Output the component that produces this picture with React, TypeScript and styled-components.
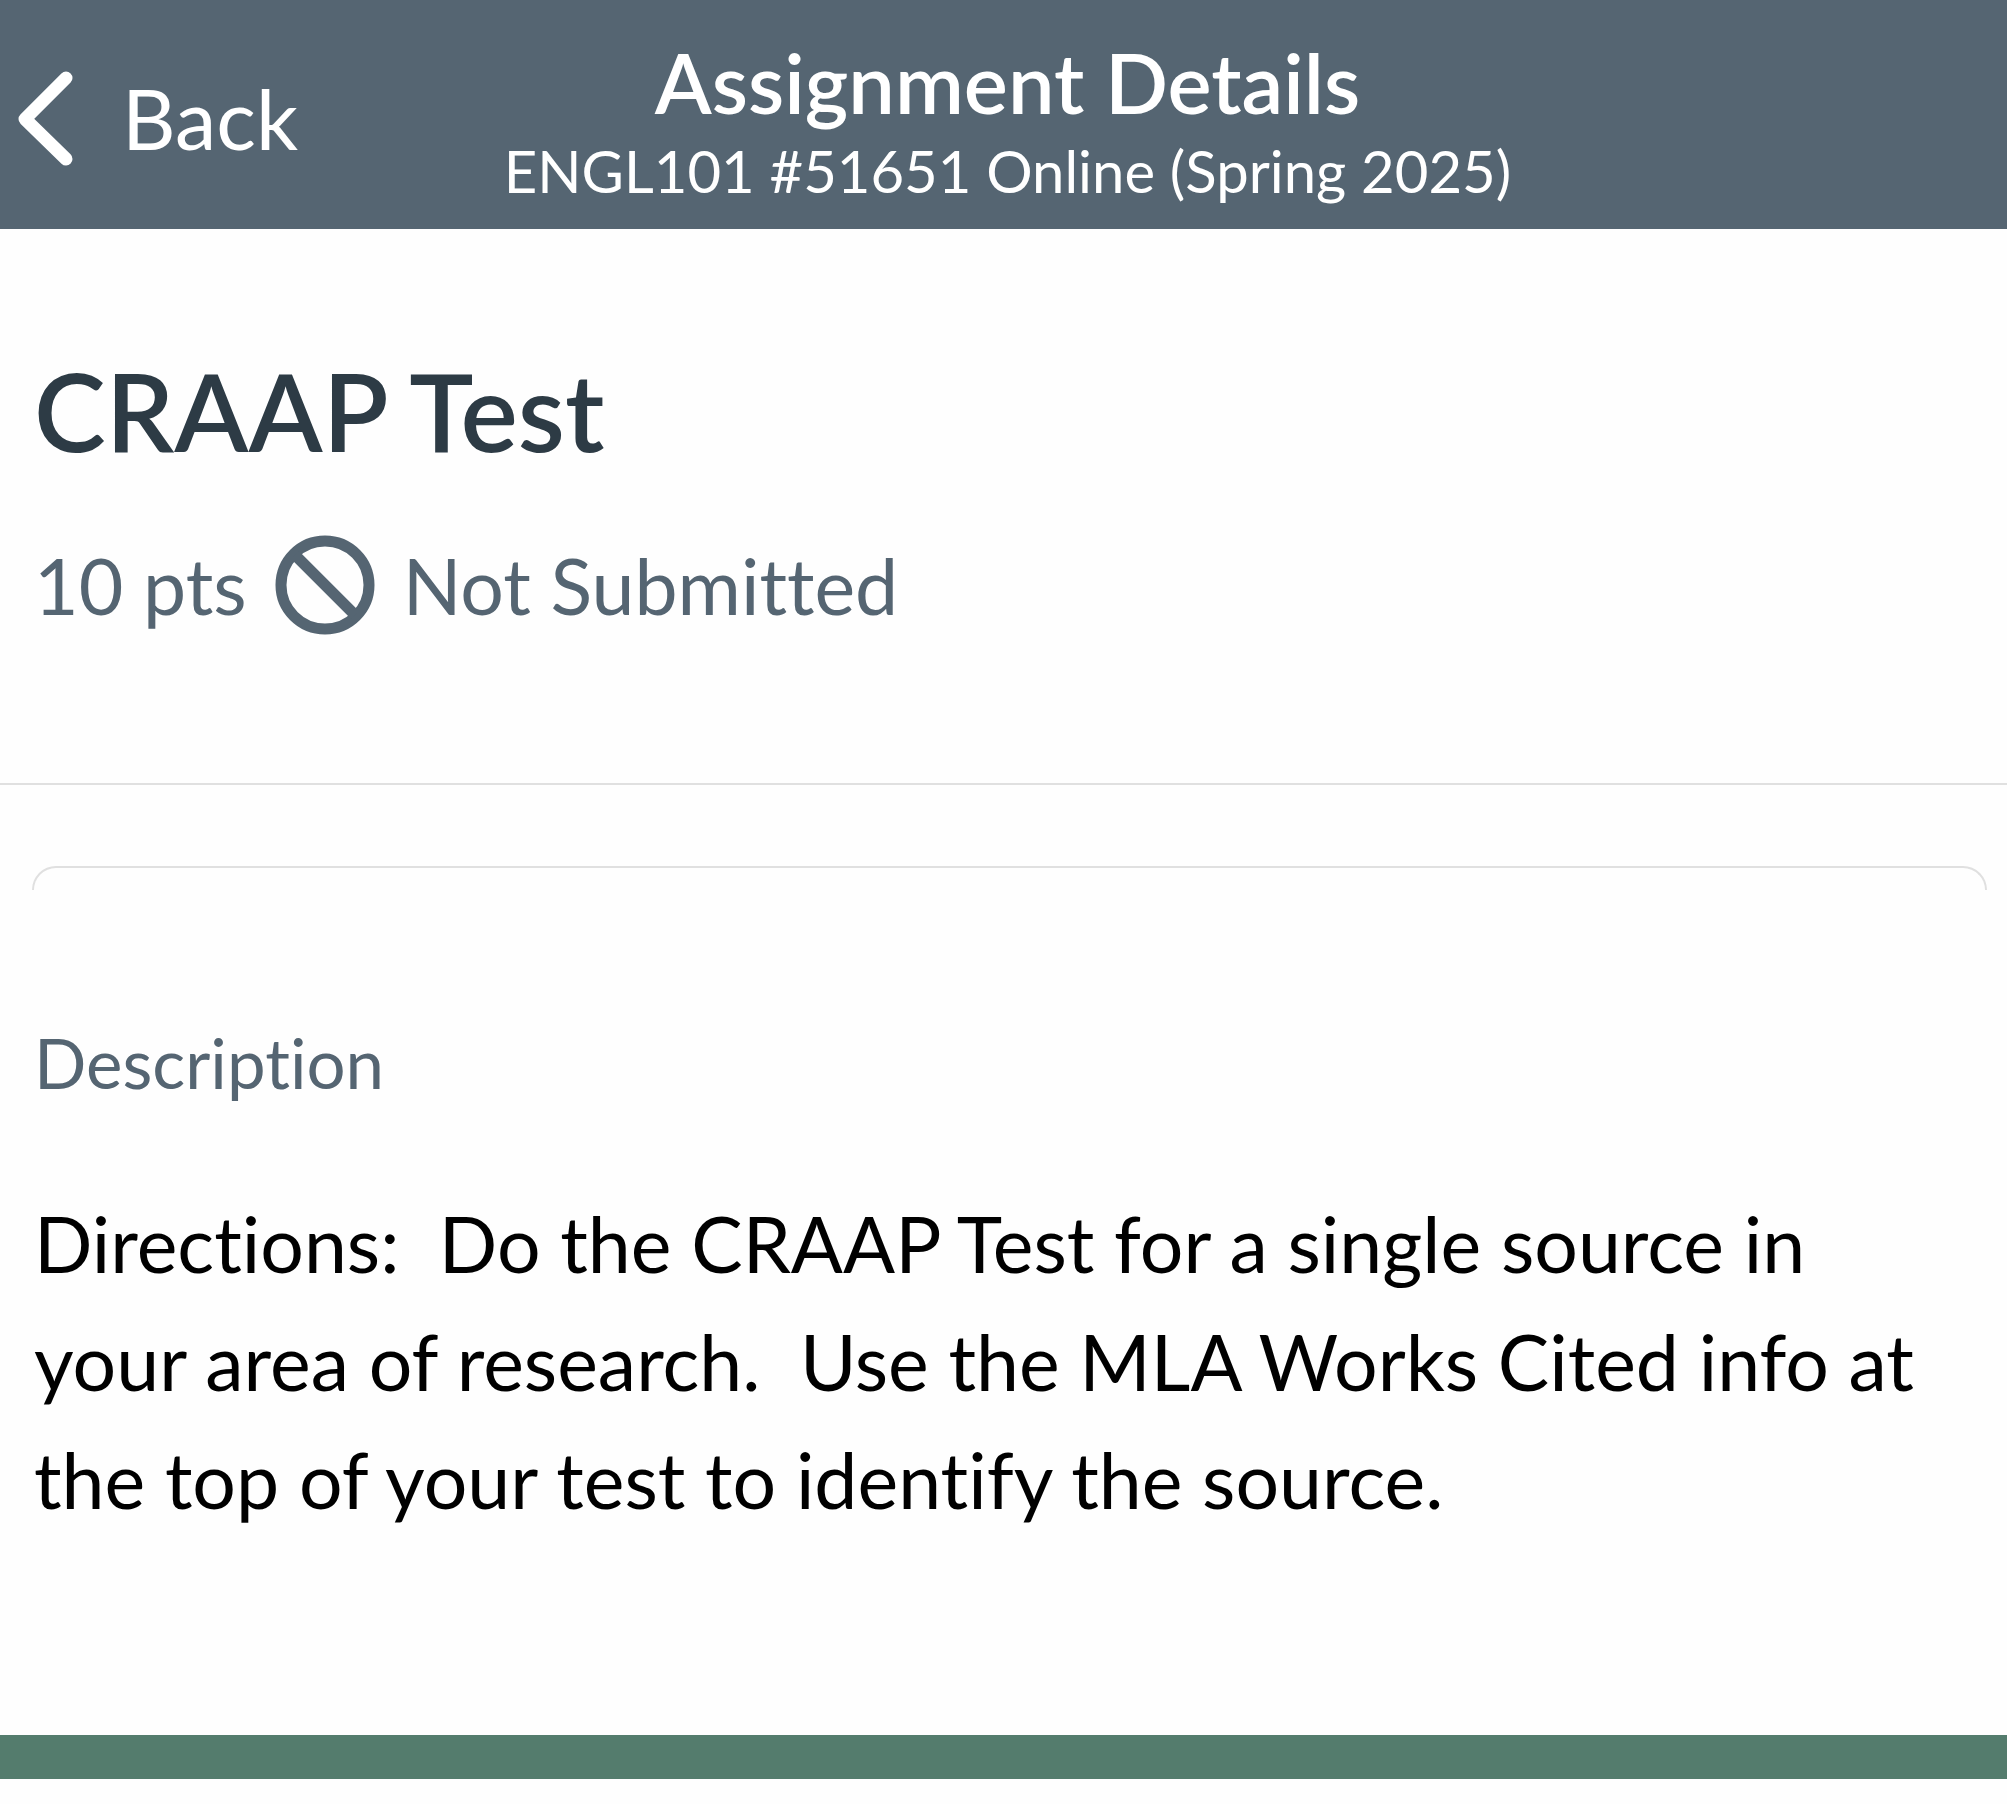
import React from "react";
import styled, { createGlobalStyle } from "styled-components";

const Global = createGlobalStyle`
  *, *::before, *::after { box-sizing: border-box; }
  body {
    margin: 0;
    background: #fefefe;
    font-family: Lato, "Liberation Sans", sans-serif;
    font-variant-ligatures: none;
  }
`;

const Page = styled.div`
  display: flex;
  flex-direction: column;
  min-height: 100vh;
`;

const NavBar = styled.header`
  display: grid;
  grid-template-columns: 1fr auto 1fr;
  align-items: start;
  padding: 34px 8px 17px 16px;
  background: #556572;
  color: #fff;
`;

const BackButton = styled.button`
  display: flex;
  align-items: center;
  justify-self: start;
  gap: 46px;
  margin-top: 36px;
  padding: 0;
  border: 0;
  background: none;
  color: inherit;
  font-family: inherit;
  font-size: 83px;
  line-height: 96px;
  cursor: pointer;
`;

const Heading = styled.div`
  text-align: center;
`;

const BarTitle = styled.h1`
  margin: 0;
  font-size: 83px;
  line-height: 96px;
  font-weight: 600;
`;

const Course = styled.p`
  margin: 0;
  font-size: 58px;
  line-height: 82px;
`;

const Summary = styled.section`
  padding: 119px 34px 148px;
  border-bottom: 2px solid #e0e0e0;
`;

const Title = styled.h2`
  margin: 0;
  color: #2d3b45;
  font-size: 108px;
  line-height: 124px;
  font-weight: 600;
`;

const Status = styled.div`
  display: flex;
  align-items: center;
  gap: 28px;
  margin-top: 63px;
  color: #556572;
  font-size: 77px;
  line-height: 100px;
`;

const CardTop = styled.div`
  height: 24px;
  margin: 81px 20px 0 32px;
  border: 2px solid #e0e0e0;
  border-bottom: 0;
  border-radius: 32px 32px 0 0;
`;

const Details = styled.section`
  padding: 129px 48px 0 34px;
`;

const Label = styled.h3`
  margin: 0;
  color: #556572;
  font-size: 69px;
  line-height: 88px;
  font-weight: 400;
`;

const Body = styled.p`
  margin: 77px 0 0;
  color: #000;
  font-size: 77px;
  line-height: 118px;
  white-space: pre-wrap;
`;

const Footer = styled.footer`
  height: 44px;
  margin: auto 0 25px;
  background: #547c6d;
`;

export default function App() {
  return (
    <Page>
      <Global />
      <NavBar>
        <BackButton type="button">
          <svg width="60" height="96" viewBox="0 0 60 96" fill="none" aria-hidden="true">
            <path d="M50 8 L9 49 L50 89" stroke="currentColor" strokeWidth="13" strokeLinecap="round" strokeLinejoin="round" />
          </svg>
          Back
        </BackButton>
        <Heading>
          <BarTitle>Assignment Details</BarTitle>
          <Course>ENGL101 #51651 Online (Spring 2025)</Course>
        </Heading>
      </NavBar>
      <main>
        <Summary>
          <Title>CRAAP Test</Title>
          <Status>
            <span>10 pts</span>
            <svg width="100" height="100" viewBox="0 0 100 100" fill="none" stroke="currentColor" strokeWidth="11" aria-hidden="true">
              <circle cx="50" cy="50" r="44" />
              <path d="M20 20 L80 80" />
            </svg>
            <span>Not Submitted</span>
          </Status>
        </Summary>
        <CardTop />
        <Details>
          <Label>Description</Label>
          <Body>{"Directions:  Do the CRAAP Test for a single source in your area of research.  Use the MLA Works Cited info at the top of your test to identify the source."}</Body>
        </Details>
      </main>
      <Footer />
    </Page>
  );
}
